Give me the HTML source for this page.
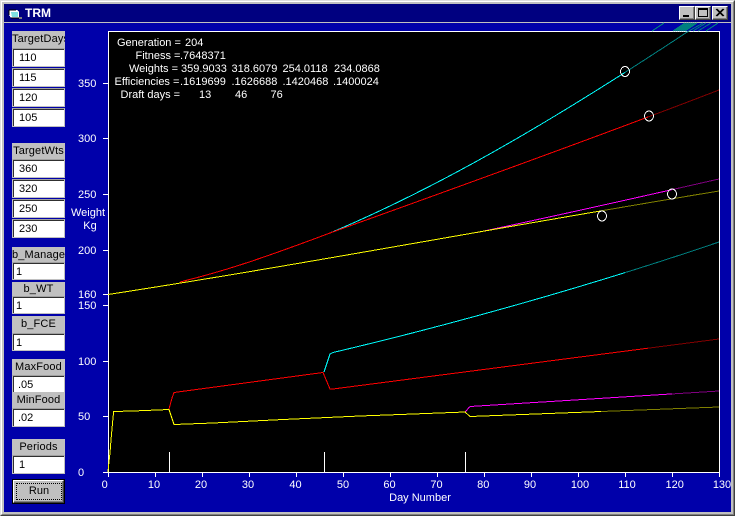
<!DOCTYPE html>
<html><head><meta charset="utf-8"><title>TRM</title>
<style>
html,body{margin:0;padding:0;background:#c0c0c0}
body{position:relative;width:735px;height:516px;overflow:hidden;font:11px "Liberation Sans",sans-serif;color:#000}
div{position:absolute;box-sizing:border-box}
.l{left:12px;width:53px;background:#c0c0c0;text-align:center;white-space:nowrap;overflow:hidden;font-size:11px;line-height:16px;letter-spacing:.15px}
.t{left:12px;width:53px;height:19px;background:#fff;border:1px solid #c0c0c0;box-shadow:inset 1px 1px 0 #303030;border-top-color:#a0a0a0;font-size:11px;line-height:19px;padding-left:6px}
.s{padding-left:3px}
.b{top:6px;width:16px;height:14px;background:#c0c0c0;border:1px solid;border-color:#fff #404040 #404040 #fff;box-shadow:inset -1px -1px 0 #808080}
svg{position:absolute;left:0;top:0}
svg text{font-family:"Liberation Sans",sans-serif;font-size:11px;fill:#fff}
</style></head>
<body>
<div style="left:0;top:0;width:735px;height:516px;background:#c0c0c0;border:1px solid;border-color:#dfdfdf #404040 #404040 #dfdfdf"></div>
<div style="left:1px;top:1px;width:733px;height:514px;border:1px solid;border-color:#fff #808080 #808080 #fff"></div>
<div style="left:4px;top:4px;width:727px;height:18px;background:#000080"></div>
<div style="left:4px;top:23px;width:727px;height:489px;background:#0000aa"></div>
<div style="left:25px;top:6px;color:#fff;font:bold 12px/14px 'Liberation Sans',sans-serif">TRM</div>
<svg width="735" height="516" style="pointer-events:none" shape-rendering="crispEdges">
<path d="M9 10h8l2 2v6H11L9 15z" fill="#fff"/>
<path d="M11 12h7v5h-6z" fill="#7fe0e0"/>
<path d="M9 10h7M9 10v5M11 18h8" stroke="#000" fill="none"/>
<rect x="19" y="17" width="3" height="2" fill="#808080"/>
</svg>
<div class="b" style="left:679px"><div style="left:3px;top:8px;width:6px;height:2px;background:#000"></div></div>
<div class="b" style="left:695px"><div style="left:2px;top:1px;width:10px;height:9px;border:1px solid #000;border-top-width:2px"></div></div>
<div class="b" style="left:712px"><svg width="14" height="12"><path d="M3 2l7 7M4 2l7 7M10 2l-7 7M11 2l-7 7" stroke="#000" fill="none"/></svg></div>

<div class="l" style="top:31px;height:17px;text-align:left;overflow:hidden">TargetDays</div>
<div class="t" style="top:48px">110</div>
<div class="t" style="top:68px">115</div>
<div class="t" style="top:88px">120</div>
<div class="t" style="top:108px">105</div>

<div class="l" style="top:143px;height:16px">TargetWts</div>
<div class="t" style="top:159px">360</div>
<div class="t" style="top:179px">320</div>
<div class="t" style="top:199px">250</div>
<div class="t" style="top:219px">230</div>

<div class="l" style="top:247px;height:15px">b_Manage</div>
<div class="t s" style="top:262px;height:18px;line-height:18px">1</div>
<div class="l" style="top:282px;height:14px;line-height:14px">b_WT</div>
<div class="t s" style="top:296px;height:18px;line-height:18px">1</div>
<div class="l" style="top:316px;height:17px">b_FCE</div>
<div class="t s" style="top:333px;height:18px;line-height:18px">1</div>

<div class="l" style="top:359px;height:16px">MaxFood</div>
<div class="t" style="top:375px;height:18px;line-height:18px;padding-left:5px">.05</div>
<div class="l" style="top:393px;height:15px;line-height:15px">MinFood</div>
<div class="t" style="top:408px;height:19px;padding-left:5px">.02</div>

<div class="l" style="top:439px;height:16px">Periods</div>
<div class="t" style="top:455px">1</div>

<div style="left:12px;top:479px;width:53px;height:25px;background:#000"></div>
<div style="left:13px;top:480px;width:51px;height:23px;background:#c0c0c0;border:1px solid;border-color:#fff #404040 #404040 #fff;box-shadow:inset -1px -1px 0 #808080"></div>
<div style="left:16px;top:483px;width:46px;height:17px;border:1px dotted #000;text-align:center;font-size:11px;line-height:14px">Run</div>

<svg width="735" height="516">
<defs>
<clipPath id="c1"><rect x="0" y="0" width="625" height="516"/></clipPath>
<clipPath id="r1"><rect x="0" y="0" width="648" height="516"/></clipPath>
<clipPath id="m1"><rect x="0" y="0" width="672" height="516"/></clipPath>
<clipPath id="y1"><rect x="0" y="0" width="601" height="516"/></clipPath>
</defs>
<g shape-rendering="crispEdges">
<rect x="108.5" y="31.5" width="611" height="441" fill="#000" stroke="#fff"/>
<path d="M103 83.5h5M103 138.5h5M103 194.5h5M103 250.5h5M103 294.5h5M103 305.5h5M103 361.5h5M103 416.5h5M103 472.5h5" stroke="#fff"/>
<path d="M108.500 472v5M155.500 472v5M202.500 472v5M249.500 472v5M296.500 472v5M343.500 472v5M390.500 472v5M437.500 472v5M484.500 472v5M531.500 472v5M578.500 472v5M625.500 472v5M672.500 472v5M719.500 472v5" stroke="#fff"/>
<path d="M169.500 452v20M324.500 452v20M465.500 452v20" stroke="#fff"/>
<g fill="none" stroke="#008080">
<path d="M330 233C450 182.600 568 110.700 688 31.500L703 23"/>
<path d="M652 31L664 23M673 31L685 23M675 31L687 23M677 31L689 23M679 31L691 23M681 31L693 23M683 31L695 23M685 31L697 23M693 31L706 23M698 31L711 23M706 31L718 23"/>
<path d="M333 352.500C450 325 590 286 719 242"/>
</g>
<g fill="none" stroke="#00ffff">
<path clip-path="url(#c1)" d="M330 233C450 182.600 568 110.700 688 31.500"/>
<path d="M324 372L328 360L330 354L333 352.500"/>
<path clip-path="url(#c1)" d="M333 352.500C450 325 590 286 719 242"/>
</g>
<g fill="none" stroke="#800000">
<path d="M330 233C450 190 600 136 719 90"/>
<path d="M333 389L719 339"/>
</g>
<g fill="none" stroke="#ff0000">
<path d="M180 282C220 272 250 263 330 233"/>
<path clip-path="url(#r1)" d="M330 233C450 190 600 136 719 90"/>
<path d="M169 409L172 398L174 392.500L323 372.500L330 389L333 389"/>
<path clip-path="url(#r1)" d="M333 389L719 339"/>
</g>
<g fill="none" stroke="#800080">
<path d="M477 232.500C560 215 640 197 719 179"/>
<path d="M470 406.500L719 391"/>
</g>
<g fill="none" stroke="#ff00ff">
<path clip-path="url(#m1)" d="M477 232.500C560 215 640 197 719 179"/>
<path d="M465 412L470 406.500"/>
<path clip-path="url(#m1)" d="M470 406.500L719 391"/>
</g>
<g fill="none" stroke="#808000">
<path d="M108 294.500C300 265 500 227 719 191"/>
<path d="M470 416.500L719 407"/>
</g>
<g fill="none" stroke="#ffff00">
<path clip-path="url(#y1)" d="M108 294.500C300 265 500 227 719 191"/>
<path d="M108 472L108.500 466L110 453L111 440L113 418L113.700 411.500L133 411L169 409.500L174 424.500L213 423L283 419.500L360 416L387 415L465 412L470 416.500"/>
<path clip-path="url(#y1)" d="M470 416.500L719 407"/>
</g>
<g fill="none" stroke="#fff">
<ellipse cx="625" cy="71.500" rx="4.500" ry="5"/>
<ellipse cx="649" cy="116" rx="4.500" ry="5"/>
<ellipse cx="672" cy="194" rx="4.500" ry="5"/>
<ellipse cx="602" cy="216" rx="4.500" ry="5"/>
</g>
</g>

<text x="78" y="87">350</text>
<text x="78" y="142">300</text>
<text x="78" y="198">250</text>
<text x="78" y="254">200</text>
<text x="78" y="298">160</text>
<text x="78" y="309">150</text>
<text x="78" y="365">100</text>
<text x="78" y="420">50</text>
<text x="78" y="476">0</text>
<text x="88" y="216" text-anchor="middle">Weight</text>
<text x="90" y="229" text-anchor="middle">Kg</text>

<g text-anchor="middle">
<text x="104.700" y="488">0</text>
<text x="154" y="488">10</text>
<text x="201" y="488">20</text>
<text x="248" y="488">30</text>
<text x="295.500" y="488">40</text>
<text x="343" y="488">50</text>
<text x="389.500" y="488">60</text>
<text x="436.500" y="488">70</text>
<text x="483.300" y="488">80</text>
<text x="530" y="488">90</text>
<text x="580" y="488">100</text>
<text x="627" y="488">110</text>
<text x="674.700" y="488">120</text>
<text x="722" y="488">130</text>
<text x="420" y="501">Day Number</text>
</g>

<text x="117" y="46">Generation =</text><text x="185" y="46">204</text>
<text x="135.500" y="59">Fitness =</text><text x="180" y="59">.7648371</text>
<text x="129" y="72">Weights =</text><text x="181" y="72">359.9033</text><text x="231.500" y="72">318.6079</text><text x="282.500" y="72">254.0118</text><text x="334" y="72">234.0868</text>
<text x="114.500" y="85">Efficiencies =</text><text x="180" y="85">.1619699</text><text x="231.500" y="85">.1626688</text><text x="282.500" y="85">.1420468</text><text x="333" y="85">.1400024</text>
<text x="120.500" y="98">Draft days =</text><text x="199" y="98">13</text><text x="235" y="98">46</text><text x="270.500" y="98">76</text>
</svg>
</body></html>
